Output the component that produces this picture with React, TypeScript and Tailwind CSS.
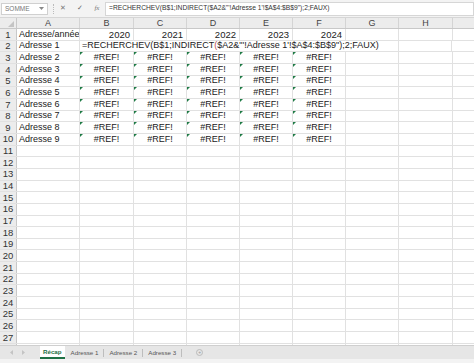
import React from 'react';

const cols = [
  { key: 'A', w: 'w-[63px]' },
  { key: 'B', w: 'w-[54px]' },
  { key: 'C', w: 'w-[53px]' },
  { key: 'D', w: 'w-[53px]' },
  { key: 'E', w: 'w-[53px]' },
  { key: 'F', w: 'w-[53px]' },
  { key: 'G', w: 'w-[53px]' },
  { key: 'H', w: 'w-[54px]' },
  { key: 'I', w: 'w-[40px]' },
];

const formula = '=RECHERCHEV(B$1;INDIRECT($A2&"\'!Adresse 1\'!$A$4:$B$9");2;FAUX)';

function ErrCell({ w }: { w: string }) {
  return (
    <div className={`${w} relative shrink-0 h-full border-r border-[#e1e1e1] flex items-center justify-center text-[#222]`}>
      <span className="absolute left-0 top-0 w-0 h-0 border-t-[3px] border-t-[#1e7b45] border-r-[3px] border-r-transparent" />
      #REF!
    </div>
  );
}

function Row({ n }: { n: number }) {
  // row 1 : headers, row 2 : formula in edit, rows 3-10 : #REF!
  const label = n === 1 ? 'Adresse/année' : n <= 10 ? `Adresse ${n - 1}` : '';
  return (
    <div className="flex h-[11.67px] shrink-0 border-b border-[#e1e1e1] box-border text-[9px] leading-none">
      <div className="w-[17px] shrink-0 bg-[#ececec] border-r border-[#c8c8c8] flex items-center justify-center text-[#333] text-[9.5px]">
        {n}
      </div>
      <div className="w-[63px] shrink-0 border-r border-[#e1e1e1] flex items-center pl-[2px] text-[#222] whitespace-nowrap overflow-hidden">
        {label}
      </div>
      {n === 1 &&
        ['2020', '2021', '2022', '2023', '2024'].map((y, i) => (
          <div
            key={y}
            className={`${cols[i + 1].w} shrink-0 border-r border-[#e1e1e1] flex items-center justify-end pr-[3px] text-[#222] text-[9.5px]`}
          >
            {y}
          </div>
        ))}
      {n === 2 && (
        <div className="w-[319px] shrink-0 flex items-center pl-[2px] text-[#222] whitespace-nowrap border-r border-[#e1e1e1]">
          =RECHERCHEV(B$1;INDIRECT<span className="text-[#c0504d]">(</span>$A2&amp;"'!Adresse 1'!$A$4:$B$9");2;FAUX)
        </div>
      )}
      {n >= 3 && n <= 10 && cols.slice(1, 6).map((c) => <ErrCell key={c.key} w={c.w} />)}
      {n > 10 && cols.slice(1, 6).map((c) => <div key={c.key} className={`${c.w} shrink-0 border-r border-[#e1e1e1]`} />)}
      {cols.slice(6).map((c) => (
        <div key={c.key} className={`${c.w} shrink-0 border-r border-[#e1e1e1]`} />
      ))}
    </div>
  );
}

export default function App() {
  const rows = Array.from({ length: 28 }, (_, i) => i + 1);
  return (
    <div className="w-[474px] h-[363px] bg-white overflow-hidden flex flex-col font-['Liberation_Sans',Arial,sans-serif]">
      {/* formula bar */}
      <div className="h-[18px] shrink-0 bg-[#f3f3f3] flex items-center border-b border-[#d6d6d6]">
        <div className="ml-[1px] w-[47px] h-[12px] bg-white border border-[#d0d0d0] flex items-center justify-between px-[3px] text-[6.5px] text-[#777]">
          <span>SOMME</span>
          <svg width="5" height="3" viewBox="0 0 5 3">
            <path d="M0 0 L5 0 L2.5 3 Z" fill="#888" />
          </svg>
        </div>
        <div className="ml-[5px] h-[10px] w-[2px] border-l border-dotted border-[#bbb]" />
        <div className="w-[50px] flex items-center justify-around text-[7px] text-[#777]">
          <span>✕</span>
          <span className="text-[#666]">✓</span>
          <span className="italic font-['Liberation_Serif',serif]">fx</span>
        </div>
        <div className="flex-1 h-[14px] bg-white border border-[#d6d6d6] flex items-center pl-[3px] text-[6.7px] text-[#333] whitespace-nowrap overflow-hidden">
          {formula}
        </div>
      </div>
      {/* column headers */}
      <div className="flex h-[11px] shrink-0 bg-[#ececec] border-b border-[#c8c8c8] text-[9px] text-[#444] leading-none">
        <div className="w-[17px] shrink-0 border-r border-[#c8c8c8] relative">
          <span className="absolute right-[2px] bottom-[1px] w-0 h-0 border-l-[6px] border-l-transparent border-b-[6px] border-b-[#c4c4c4]" />
        </div>
        {cols.map((c) => (
          <div key={c.key} className={`${c.w} shrink-0 border-r border-[#d4d4d4] flex items-center justify-center`}>
            {c.key !== 'I' ? c.key : ''}
          </div>
        ))}
      </div>
      {/* grid */}
      <div className="flex-1 overflow-hidden flex flex-col">
        {rows.map((n) => (
          <Row key={n} n={n} />
        ))}
      </div>
      {/* sheet tabs */}
      <div className="h-[14px] shrink-0 bg-[#e6e6e6] border-t border-[#cfcfcf] flex items-center text-[6.2px] text-[#555]">
        <div className="w-[40px] pl-[10px] flex items-center gap-[9px]">
          <svg width="3" height="5" viewBox="0 0 3 5">
            <path d="M3 0 L0 2.5 L3 5 Z" fill="#c4c4c4" />
          </svg>
          <svg width="3" height="5" viewBox="0 0 3 5">
            <path d="M0 0 L3 2.5 L0 5 Z" fill="#c4c4c4" />
          </svg>
        </div>
        <div className="h-full bg-white px-[3px] flex items-center font-bold text-[#1e7145] border-b-[2px] border-[#1e7145]">
          Récap
        </div>
        <div className="pl-[6px] pr-[5px] border-r border-[#bdbdbd] h-[8px] flex items-center">Adresse 1</div>
        <div className="px-[5px] border-r border-[#bdbdbd] h-[8px] flex items-center">Adresse 2</div>
        <div className="px-[5px] border-r border-[#bdbdbd] h-[8px] flex items-center">Adresse 3</div>
        <div className="ml-[14px] w-[7px] h-[7px] rounded-full border border-[#bbb] flex items-center justify-center text-[5px] text-[#999]">
          +
        </div>
      </div>
      <div className="h-[4px] shrink-0 bg-[#f3f3f3]" />
    </div>
  );
}
